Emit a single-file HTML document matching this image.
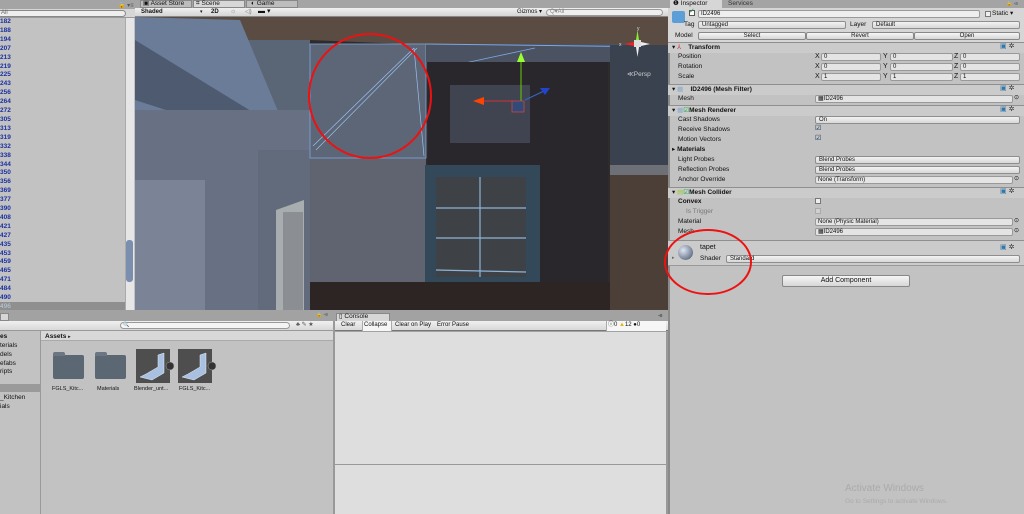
<!DOCTYPE html>
<html><head><meta charset="utf-8"><style>
*{box-sizing:border-box;margin:0;padding:0}
body{width:1024px;height:514px;overflow:hidden;background:#a2a2a2;font-family:"Liberation Sans",sans-serif;font-size:7px;color:#111;position:relative}
.a{position:absolute}
.t{position:absolute;white-space:nowrap;font-size:7px;line-height:9px}
.fld{position:absolute;background:#e4e4e4;border:1px solid #999;border-radius:2px;height:8px;font-size:6px;line-height:6px;padding-left:2px;white-space:nowrap}
.pop{position:absolute;background:linear-gradient(#f2f2f2,#d8d8d8);border:1px solid #8e8e8e;border-radius:2px;height:8px;font-size:6px;line-height:6px;padding-left:3px}
.hdr{position:absolute;left:668px;width:356px;height:11px;background:#cbcbcb;border-top:1px solid #8f8f8f}
.lbl{position:absolute;left:678px;font-size:6.5px;line-height:9px}
.btn{position:absolute;background:linear-gradient(#f6f6f6,#d6d6d6);border:1px solid #888;border-radius:2px;font-size:6px;text-align:center}
</style></head><body>

<!-- Hierarchy -->
<div class="a" style="left:0;top:0;width:135px;height:310px;background:#c2c2c2"></div>
<div class="a" style="left:0;top:0;width:135px;height:9px;background:#a4a4a4"></div>
<div class="a" style="left:0;top:9px;width:135px;height:9px;background:#d6d6d6;border-bottom:1px solid #999"></div>
<div class="a" style="left:-4px;top:10px;width:130px;height:7px;border:1px solid #888;border-radius:4px;background:#eee"></div>
<div class="t" style="left:1px;top:9px;font-size:6px;color:#666">All</div>
<div class="t" style="left:118px;top:2px;font-size:6px;color:#555">🔒 ▾≡</div>
<div class="a" style="left:0;top:18px;width:125px;font-size:6.5px;line-height:8.9px;color:#1a2fa0;font-weight:bold" id="h">
182<br>188<br>194<br>207<br>213<br>219<br>225<br>243<br>256<br>264<br>272<br>305<br>313<br>319<br>332<br>338<br>344<br>350<br>356<br>369<br>377<br>390<br>408<br>421<br>427<br>435<br>453<br>459<br>465<br>471<br>484<br>490</div>
<div class="a" style="left:0;top:302px;width:125px;height:9px;background:#8f8f8f"></div>
<div class="t" style="left:0;top:302px;color:#bcd;font-size:6.5px">496</div>
<div class="a" style="left:125px;top:18px;width:9px;height:292px;background:#e6e6e6;border-left:1px solid #aaa"></div>
<div class="a" style="left:126px;top:240px;width:7px;height:42px;background:#7b8eae;border-radius:3px"></div>

<!-- Scene tabs/toolbar -->
<div class="a" style="left:135px;top:0;width:533px;height:8px;background:#a4a4a4"></div>
<div class="a" style="left:140px;top:0;width:52px;height:8px;background:#bdbdbd;border:1px solid #888"></div>
<div class="t" style="left:143px;top:-1px;font-size:6.5px">▣ Asset Store</div>
<div class="a" style="left:193px;top:0;width:52px;height:8px;background:#d8d8d8;border:1px solid #888"></div>
<div class="t" style="left:196px;top:-1px;font-size:6.5px">⌗ Scene</div>
<div class="a" style="left:246px;top:0;width:52px;height:8px;background:#bdbdbd;border:1px solid #888"></div>
<div class="t" style="left:251px;top:-1px;font-size:6.5px">◐ Game</div>
<div class="a" style="left:135px;top:8px;width:533px;height:9px;background:linear-gradient(#f0f0f0,#d4d4d4);border-bottom:1px solid #888"></div>
<div class="t" style="left:141px;top:8px;font-size:6px;font-weight:bold">Shaded</div>
<div class="t" style="left:200px;top:8px;font-size:5px">▾</div>
<div class="t" style="left:211px;top:8px;font-size:6px;font-weight:bold">2D</div>
<div class="t" style="left:230px;top:7px;font-size:7px;color:#888">☼</div>
<div class="t" style="left:245px;top:8px;font-size:6px;color:#777">◁)</div>
<div class="t" style="left:258px;top:7px;font-size:7px">▬ ▾</div>
<div class="t" style="left:517px;top:8px;font-size:6px">Gizmos ▾</div>
<div class="a" style="left:546px;top:9px;width:117px;height:7px;border:1px solid #999;border-radius:4px;background:#eee"></div>
<div class="t" style="left:550px;top:8px;font-size:6px;color:#888">Q▾All</div>

<!-- Scene view -->
<div class="a" style="left:135px;top:17px;width:533px;height:293px;background:#3a3a40;overflow:hidden">
<svg width="533" height="293" viewBox="135 17 533 293" style="position:absolute;left:0;top:0">
<rect x="135" y="17" width="533" height="293" fill="#2f2b2a"/>
<polygon points="135,17 668,17 668,45 430,45 310,40 250,48 135,40" fill="#5b4c43"/>
<polygon points="230,40 310,40 310,150 280,150" fill="#5a6676"/>
<polygon points="135,17 240,20 290,140 135,110" fill="#6b7c98"/>
<polygon points="135,40 290,135 290,150 135,100" fill="#4d5a70"/>
<rect x="135" y="110" width="175" height="200" fill="#687184"/>
<rect x="135" y="180" width="70" height="130" fill="#7a8496"/>
<rect x="258" y="150" width="52" height="160" fill="#626b7c"/>
<polygon points="276,210 304,200 304,310 276,310" fill="#a8adb0"/>
<rect x="283" y="212" width="20" height="98" fill="#8b8e92"/>
<rect x="310" y="158" width="116" height="124" fill="#5f6470"/>
<rect x="310" y="44" width="116" height="114" fill="#5c6676" stroke="#7ea6e0" stroke-width="0.8"/>
<line x1="313" y1="146" x2="414" y2="48" stroke="#9cc0f0" stroke-width="0.7"/>
<line x1="316" y1="150" x2="417" y2="48" stroke="#9cc0f0" stroke-width="0.7"/>
<line x1="414" y1="48" x2="424" y2="156" stroke="#9cc0f0" stroke-width="0.7"/>
<rect x="426" y="44" width="200" height="18" fill="#4b5261"/>
<line x1="426" y1="44" x2="668" y2="47" stroke="#7ea6e0" stroke-width="1"/>
<line x1="465" y1="63" x2="535" y2="48" stroke="#7ea6e0" stroke-width="0.8"/>
<rect x="428" y="62" width="180" height="220" fill="#29272c"/>
<rect x="450" y="85" width="80" height="58" fill="#3f4450"/>
<rect x="610" y="45" width="58" height="120" fill="#3a4250"/>
<rect x="610" y="165" width="58" height="10" fill="#6e7078"/>
<rect x="610" y="175" width="58" height="135" fill="#4c3f38"/>
<rect x="425" y="165" width="115" height="117" fill="#33495a"/>
<rect x="436" y="177" width="90" height="100" fill="#3e4247"/>
<g stroke="#8fb4d6" stroke-width="1.2"><line x1="436" y1="208" x2="526" y2="208"/><line x1="436" y1="238" x2="526" y2="238"/><line x1="480" y1="177" x2="480" y2="277"/><line x1="436" y1="270" x2="526" y2="272"/></g>
<rect x="310" y="282" width="300" height="28" fill="#2c2523"/>
<!-- gizmo -->
<line x1="521" y1="107" x2="521" y2="58" stroke="#6c0" stroke-width="1"/>
<polygon points="517,62 525,62 521,52" fill="#9f3"/>
<line x1="515" y1="101" x2="480" y2="101" stroke="#c33" stroke-width="1"/>
<polygon points="484,97 484,105 473,101" fill="#f40"/>
<line x1="525" y1="100" x2="544" y2="91" stroke="#36c" stroke-width="1"/>
<polygon points="540,88 550,88 545,95" fill="#24c"/>
<rect x="512" y="101" width="12" height="11" fill="#324a7a" stroke="#c44" stroke-width="0.8"/>
<!-- orientation -->
<rect x="634" y="40" width="7" height="7" fill="#ddd"/>
<polygon points="636,40 639,40 637.5,30" fill="#8e3"/>
<polygon points="634,42 634,46 624,44" fill="#e22"/>
<polygon points="641,42 641,46 650,44" fill="#eee"/>
<polygon points="636,47 639,47 637.5,57" fill="#eee"/>
<text x="637" y="30" font-size="5" fill="#ddd" font-family="Liberation Sans">y</text>
<text x="619" y="46" font-size="5" fill="#ddd" font-family="Liberation Sans">x</text>
<text x="627" y="76" font-size="6.5" fill="#ccc" font-family="Liberation Sans">≪Persp</text>
</svg>
</div>

<!-- Bottom -->
<div class="a" style="left:0;top:310px;width:668px;height:10px;background:#a2a2a2"></div>
<div class="a" style="left:0;top:313px;width:9px;height:8px;background:#d6d6d6;border:1px solid #888"></div>
<div class="t" style="left:316px;top:311px;font-size:5px;color:#444">🔒 -≡</div>
<div class="a" style="left:336px;top:313px;width:54px;height:8px;background:#d6d6d6;border:1px solid #888;border-bottom:none"></div>
<div class="t" style="left:339px;top:312px;font-size:6.5px">▯ Console</div>
<div class="t" style="left:658px;top:312px;font-size:5px">-≡</div>
<!-- project -->
<div class="a" style="left:0;top:321px;width:333px;height:10px;background:linear-gradient(#f0f0f0,#d8d8d8);border-bottom:1px solid #999"></div>
<div class="a" style="left:120px;top:322px;width:170px;height:7px;border:1px solid #999;border-radius:4px;background:#f4f4f4"></div>
<div class="t" style="left:123px;top:321px;font-size:5px">🔍</div>
<div class="t" style="left:296px;top:321px;font-size:6px;color:#555">♣ ✎ ★</div>
<div class="a" style="left:0;top:331px;width:41px;height:183px;background:#c2c2c2;border-right:1px solid #999"></div>
<div class="t" style="left:0;top:333px;font-size:6.5px;line-height:8.8px;font-weight:bold">es</div>
<div class="t" style="left:0;top:342px;font-size:6.5px;line-height:8.8px">terials<br>dels<br>efabs<br>ripts</div>
<div class="a" style="left:0;top:384px;width:41px;height:8px;background:#9a9a9a"></div>
<div class="t" style="left:0;top:394px;font-size:6.5px;line-height:8.8px">_Kitchen<br>ials</div>
<div class="a" style="left:41px;top:331px;width:292px;height:183px;background:#c2c2c2"></div>
<div class="a" style="left:41px;top:331px;width:292px;height:10px;background:#d8d8d8;border-bottom:1px solid #aaa"></div>
<div class="t" style="left:45px;top:332px;font-size:6.5px;font-weight:bold">Assets <span style="font-weight:normal;font-size:5px">▸</span></div>
<div class="a" style="left:53px;top:355px;width:31px;height:24px;background:#5b6772;border-radius:2px"></div>
<div class="a" style="left:53px;top:352px;width:12px;height:4px;background:#6b7682;border-radius:2px 2px 0 0"></div>
<div class="a" style="left:95px;top:355px;width:31px;height:24px;background:#5b6772;border-radius:2px"></div>
<div class="a" style="left:95px;top:352px;width:12px;height:4px;background:#6b7682;border-radius:2px 2px 0 0"></div>
<div class="a" style="left:136px;top:349px;width:34px;height:34px;background:#4e4e4e"></div>
<div class="a" style="left:178px;top:349px;width:34px;height:34px;background:#4e4e4e"></div>
<svg class="a" style="left:136px;top:349px" width="84" height="34"><g fill="#a9c0e0" stroke="#e5eefa" stroke-width="0.5"><polygon points="10,25 22,18 22,6 28,4 28,24 16,31 4,28"/><polygon points="52,25 64,18 64,6 70,4 70,24 58,31 46,28"/></g><circle cx="34" cy="17" r="4" fill="#333" stroke="#aaa" stroke-width="0.5"/><circle cx="76" cy="17" r="4" fill="#333" stroke="#aaa" stroke-width="0.5"/></svg>
<div class="t" style="left:52px;top:385px;font-size:5.5px">FGLS_Kitc...</div>
<div class="t" style="left:97px;top:385px;font-size:5.5px">Materials</div>
<div class="t" style="left:134px;top:385px;font-size:5.5px">Blender_unt...</div>
<div class="t" style="left:179px;top:385px;font-size:5.5px">FGLS_Kitc...</div>
<!-- console -->
<div class="a" style="left:333px;top:321px;width:2px;height:193px;background:#999"></div>
<div class="a" style="left:335px;top:321px;width:333px;height:10px;background:linear-gradient(#f0f0f0,#d8d8d8);border-bottom:1px solid #777"></div>
<div class="t" style="left:341px;top:321px;font-size:6px">Clear</div>
<div class="a" style="left:362px;top:321px;width:30px;height:10px;background:#f6f6f6;border-left:1px solid #aaa;border-right:1px solid #aaa"></div>
<div class="t" style="left:364px;top:321px;font-size:6px">Collapse</div>
<div class="t" style="left:395px;top:321px;font-size:6px">Clear on Play</div>
<div class="t" style="left:437px;top:321px;font-size:6px">Error Pause</div>
<div class="a" style="left:606px;top:321px;width:60px;height:10px;background:#f6f6f6;border-left:1px solid #aaa"></div>
<div class="t" style="left:608px;top:321px;font-size:6px">ⓘ0 <span style="color:#e2b800">▲</span>12 ●0</div>
<div class="a" style="left:335px;top:332px;width:333px;height:182px;background:#dedede;border-right:2px solid #999"></div>
<div class="a" style="left:335px;top:464px;width:331px;height:1px;background:#999"></div>

<!-- Inspector -->
<div class="a" style="left:668px;top:0;width:356px;height:514px;background:#c2c2c2;border-left:2px solid #8a8a8a"></div>
<div class="a" style="left:668px;top:0;width:356px;height:8px;background:#a4a4a4"></div>
<div class="a" style="left:670px;top:0;width:52px;height:8px;background:#d6d6d6"></div>
<div class="t" style="left:673px;top:-1px;font-size:6.5px">❶ Inspector</div>
<div class="t" style="left:728px;top:-1px;font-size:6.5px;color:#333">Services</div>
<div class="t" style="left:1006px;top:0;font-size:5px;color:#444">🔒 -≡</div>
<div class="a" style="left:668px;top:8px;width:356px;height:35px;background:#d6d6d6;border-bottom:1px solid #999"></div>
<div class="a" style="left:672px;top:11px;width:13px;height:12px;background:#5b9ed8;border-radius:2px"></div>
<div class="a" style="left:689px;top:10px;width:6px;height:6px;background:#fff;border:1px solid #555"></div>
<div class="t" style="left:689px;top:7px;font-size:7px;color:#1a4">✓</div>
<div class="fld" style="left:698px;top:10px;width:282px;background:#eee">ID2496</div>
<div class="a" style="left:985px;top:11px;width:6px;height:6px;background:#eee;border:1px solid #777"></div>
<div class="t" style="left:992px;top:9px;font-size:6.5px">Static ▾</div>
<div class="t" style="left:684px;top:20px;font-size:6.5px">Tag</div>
<div class="pop" style="left:698px;top:21px;width:148px">Untagged</div>
<div class="t" style="left:850px;top:20px;font-size:6.5px">Layer</div>
<div class="pop" style="left:872px;top:21px;width:148px">Default</div>
<div class="t" style="left:675px;top:31px;font-size:6.5px">Model</div>
<div class="btn" style="left:698px;top:32px;width:108px;height:8px;line-height:6px">Select</div>
<div class="btn" style="left:806px;top:32px;width:108px;height:8px;line-height:6px">Revert</div>
<div class="btn" style="left:914px;top:32px;width:106px;height:8px;line-height:6px">Open</div>

<div class="hdr" style="top:42px"></div>
<div class="t" style="left:672px;top:43px;font-size:6.5px">▾ <span style="color:#c33">⅄</span>&nbsp;&nbsp;&nbsp;&nbsp;<b>Transform</b></div>
<div class="lbl" style="top:52px">Position</div>
<div class="lbl" style="top:62px">Rotation</div>
<div class="lbl" style="top:72px">Scale</div>
<div id="tf"></div>

<div class="hdr" style="top:84px"></div>
<div class="t" style="left:672px;top:85px;font-size:6.5px">▾ <span style="color:#8ac">▦</span>&nbsp;&nbsp;&nbsp;&nbsp;<b>ID2496 (Mesh Filter)</b></div>
<div class="lbl" style="top:94px">Mesh</div>
<div class="fld" style="left:815px;top:95px;width:198px">▦ID2496</div>

<div class="hdr" style="top:105px"></div>
<div class="t" style="left:672px;top:106px;font-size:6.5px">▾ <span style="color:#8ac">▦</span><span style="color:#1a4">☑</span><b>Mesh Renderer</b></div>
<div class="lbl" style="top:115px">Cast Shadows</div>
<div class="pop" style="left:815px;top:116px;width:205px">On</div>
<div class="lbl" style="top:125px">Receive Shadows</div>
<div class="lbl" style="top:135px">Motion Vectors</div>
<div class="t" style="left:815px;top:124px;color:#135">☑</div>
<div class="t" style="left:815px;top:134px;color:#135">☑</div>
<div class="t" style="left:672px;top:145px;font-size:6.5px">▸ <b>Materials</b></div>
<div class="lbl" style="top:155px">Light Probes</div>
<div class="pop" style="left:815px;top:156px;width:205px">Blend Probes</div>
<div class="lbl" style="top:165px">Reflection Probes</div>
<div class="pop" style="left:815px;top:166px;width:205px">Blend Probes</div>
<div class="lbl" style="top:175px">Anchor Override</div>
<div class="fld" style="left:815px;top:176px;width:198px">None (Transform)</div>

<div class="hdr" style="top:187px"></div>
<div class="t" style="left:672px;top:188px;font-size:6.5px">▾ <span style="color:#9c3">▤</span><span style="color:#1a4">☑</span><b>Mesh Collider</b></div>
<div class="lbl" style="top:197px;font-weight:bold">Convex</div>
<div class="lbl" style="top:207px;left:686px;color:#777">Is Trigger</div>
<div class="a" style="left:815px;top:198px;width:6px;height:6px;background:#eee;border:1px solid #777"></div>
<div class="a" style="left:815px;top:208px;width:6px;height:6px;background:#d0d0d0;border:1px solid #aaa"></div>
<div class="lbl" style="top:217px">Material</div>
<div class="fld" style="left:815px;top:218px;width:198px">None (Physic Material)</div>
<div class="lbl" style="top:227px">Mesh</div>
<div class="fld" style="left:815px;top:228px;width:198px">▦ID2496</div>

<div class="a" style="left:668px;top:240px;width:356px;height:26px;background:#cbcbcb;border-top:1px solid #8f8f8f;border-bottom:1px solid #999"></div>
<div class="a" style="left:678px;top:245px;width:15px;height:15px;border-radius:50%;background:radial-gradient(circle at 35% 35%,#dfe6f2,#6f7b90 70%,#3b4452)"></div>
<div class="t" style="left:700px;top:243px;font-size:7px">tapet</div>
<div class="t" style="left:672px;top:254px;font-size:5px;color:#666">▸</div>
<div class="t" style="left:700px;top:254px;font-size:6.5px">Shader</div>
<div class="pop" style="left:726px;top:255px;width:294px">Standard</div>
<div class="btn" style="left:782px;top:275px;width:128px;height:12px;line-height:10px;font-size:7px">Add Component</div>
<div class="t" style="left:1000px;top:42px;font-size:7px;color:#333"><span style="color:#37a">▣</span> ✲</div>
<div class="t" style="left:1000px;top:84px;font-size:7px;color:#333"><span style="color:#37a">▣</span> ✲</div>
<div class="t" style="left:1000px;top:105px;font-size:7px;color:#333"><span style="color:#37a">▣</span> ✲</div>
<div class="t" style="left:1000px;top:187px;font-size:7px;color:#333"><span style="color:#37a">▣</span> ✲</div>
<div class="t" style="left:1000px;top:243px;font-size:7px;color:#333"><span style="color:#37a">▣</span> ✲</div>
<div class="t" style="left:1014px;top:94px;font-size:6px">⊙</div>
<div class="t" style="left:1014px;top:175px;font-size:6px">⊙</div>
<div class="t" style="left:1014px;top:217px;font-size:6px">⊙</div>
<div class="t" style="left:1014px;top:227px;font-size:6px">⊙</div>
<div class="t" style="left:845px;top:483px;font-size:10px;line-height:12px;color:#aaa">Activate Windows</div>
<div class="t" style="left:845px;top:497px;font-size:6.5px;color:#aaa">Go to Settings to activate Windows.</div>

<!-- transform fields -->
<div class="t" style="left:815px;top:52px">X</div><div class="fld" style="left:821px;top:53px;width:60px">0</div>
<div class="t" style="left:883px;top:52px">Y</div><div class="fld" style="left:890px;top:53px;width:63px">0</div>
<div class="t" style="left:954px;top:52px">Z</div><div class="fld" style="left:960px;top:53px;width:60px">0</div>
<div class="t" style="left:815px;top:62px">X</div><div class="fld" style="left:821px;top:63px;width:60px">0</div>
<div class="t" style="left:883px;top:62px">Y</div><div class="fld" style="left:890px;top:63px;width:63px">0</div>
<div class="t" style="left:954px;top:62px">Z</div><div class="fld" style="left:960px;top:63px;width:60px">0</div>
<div class="t" style="left:815px;top:72px">X</div><div class="fld" style="left:821px;top:73px;width:60px">1</div>
<div class="t" style="left:883px;top:72px">Y</div><div class="fld" style="left:890px;top:73px;width:63px">1</div>
<div class="t" style="left:954px;top:72px">Z</div><div class="fld" style="left:960px;top:73px;width:60px">1</div>

<!-- red circles -->
<svg class="a" style="left:0;top:0" width="1024" height="514">
<ellipse cx="370" cy="96" rx="61" ry="62" fill="none" stroke="#ee1111" stroke-width="2"/>
<ellipse cx="708" cy="262" rx="43" ry="32" fill="none" stroke="#ee1111" stroke-width="2"/>
</svg>
</body></html>
